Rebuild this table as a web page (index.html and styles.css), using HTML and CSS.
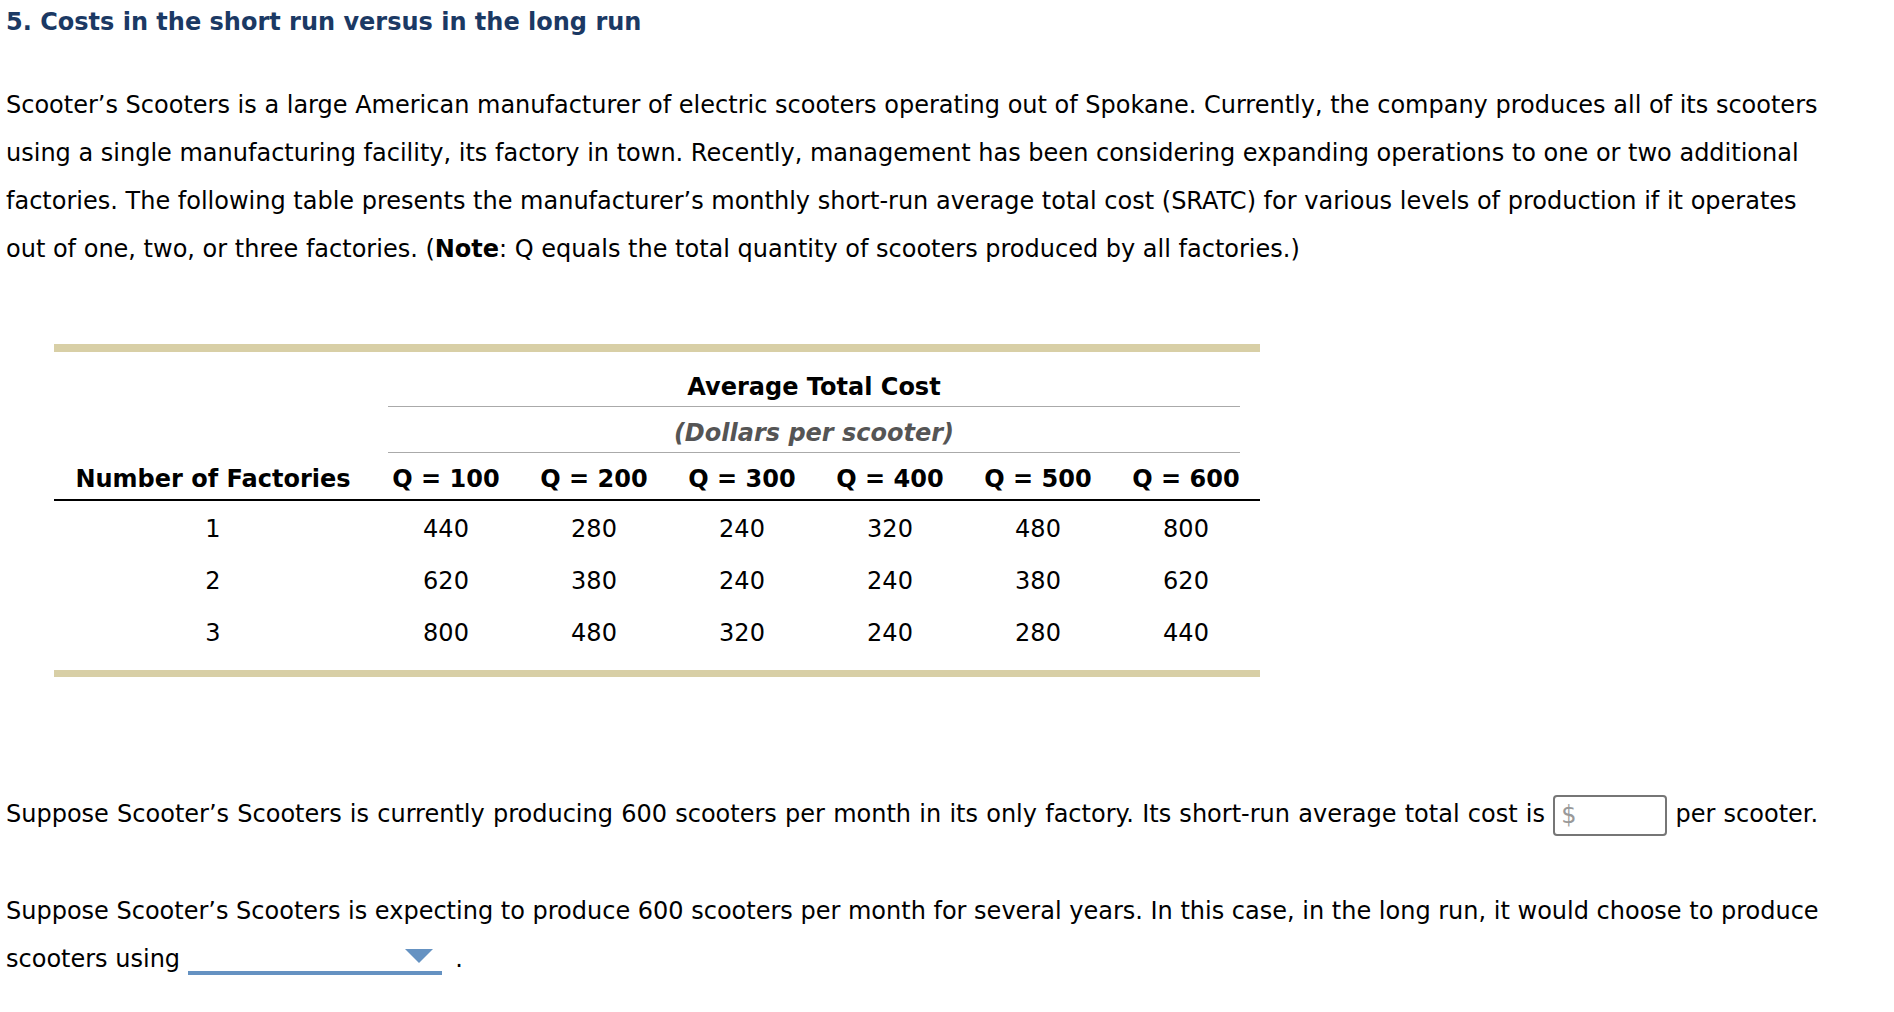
FILE: index.html
```html
<!DOCTYPE html>
<html>
<head>
<meta charset="utf-8">
<link rel="stylesheet" href="styles.css">
</head>
<body>
<div class="page">
  <h1 class="title">5. Costs in the short run versus in the long run</h1>
  <p class="para">Scooter’s Scooters is a large American manufacturer of electric scooters operating out of Spokane. Currently, the company produces all of its scooters<br>using a single manufacturing facility, its factory in town. Recently, management has been considering expanding operations to one or two additional<br>factories. The following table presents the manufacturer’s monthly short-run average total cost (SRATC) for various levels of production if it operates<br>out of one, two, or three factories. (<b>Note</b>: Q equals the total quantity of scooters produced by all factories.)</p>

  <div class="costs">
    <div class="grid">
      <div class="blank"></div>
      <div class="span6"><div class="cap1">Average Total Cost</div></div>
      <div class="blank"></div>
      <div class="span6"><div class="cap2">(Dollars per scooter)</div></div>
      <div class="hd">Number of Factories</div>
      <div class="hd">Q = 100</div>
      <div class="hd">Q = 200</div>
      <div class="hd">Q = 300</div>
      <div class="hd">Q = 400</div>
      <div class="hd">Q = 500</div>
      <div class="hd">Q = 600</div>

      <div class="td">1</div><div class="td">440</div><div class="td">280</div><div class="td">240</div><div class="td">320</div><div class="td">480</div><div class="td">800</div>
      <div class="td">2</div><div class="td">620</div><div class="td">380</div><div class="td">240</div><div class="td">240</div><div class="td">380</div><div class="td">620</div>
      <div class="td">3</div><div class="td">800</div><div class="td">480</div><div class="td">320</div><div class="td">240</div><div class="td">280</div><div class="td">440</div>
    </div>
  </div>

  <p class="q1">Suppose Scooter’s Scooters is currently producing 600 scooters per month in its only factory. Its short-run average total cost is <span class="money"><span class="dollar">$</span></span> per scooter.</p>

  <p class="q2">Suppose Scooter’s Scooters is expecting to produce 600 scooters per month for several years. In this case, in the long run, it would choose to produce<br>scooters using <span class="select"><svg class="caret" width="28" height="14" viewBox="0 0 28 14"><polygon points="0,0 28,0 14,14" fill="#6592c2"/></svg></span> .</p>
</div>
</body>
</html>
```

FILE: styles.css
```css
html, body {
  margin: 0;
  padding: 0;
  background: #fff;
}
.page {
  padding: 0 0 0 6px;
  font-family: "DejaVu Sans", Verdana, sans-serif;
  font-size: 24px;
  color: #000;
}
.title {
  margin: 0;
  padding-top: 8px;
  font-size: 24px;
  line-height: 28px;
  font-weight: bold;
  color: #1b3964;
}
.para {
  margin: 45px 0 0 0;
  line-height: 48px;
}
.costs {
  margin: 71px 0 0 48px;
  width: 1206px;
  border-top: 8px solid #d8cfa6;
  border-bottom: 7px solid #d8cfa6;
  padding-bottom: 13px;
}
.grid {
  display: grid;
  grid-template-columns: 318px repeat(6, 148px);
}
.span6 {
  grid-column: span 6;
}
.cap1 {
  margin: 0 20px 0 16px;
  padding: 22px 0 6px;
  line-height: 26px;
  text-align: center;
  font-weight: bold;
  border-bottom: 1px solid #aaa;
}
.cap2 {
  margin: 0 20px 0 16px;
  padding: 13px 0 6px;
  line-height: 26px;
  text-align: center;
  font-weight: bold;
  font-style: italic;
  color: #555;
  border-bottom: 1px solid #aaa;
}
.hd {
  padding: 13px 0 7px;
  line-height: 26px;
  text-align: center;
  font-weight: bold;
  border-bottom: 2px solid #000;
  white-space: nowrap;
}
.td {
  height: 52px;
  line-height: 56px;
  text-align: center;
}
.q1 {
  margin: 113px 0 0 0;
  line-height: 48px;
  word-spacing: 0.6px;
}
.money {
  display: inline-block;
  box-sizing: border-box;
  width: 114px;
  height: 41px;
  border: 2px solid #767676;
  border-radius: 4px;
  vertical-align: middle;
  text-align: left;
  line-height: 36px;
  padding-left: 6px;
}
.dollar {
  color: #999;
}
.q2 {
  margin: 49px 0 0 0;
  line-height: 48px;
}
.select {
  display: inline-block;
  width: 254px;
  height: 26px;
  margin-right: 6px;
  border-bottom: 4px solid #6592c2;
  vertical-align: -8px;
  position: relative;
}
.caret {
  position: absolute;
  right: 9px;
  top: 4px;
}
```
